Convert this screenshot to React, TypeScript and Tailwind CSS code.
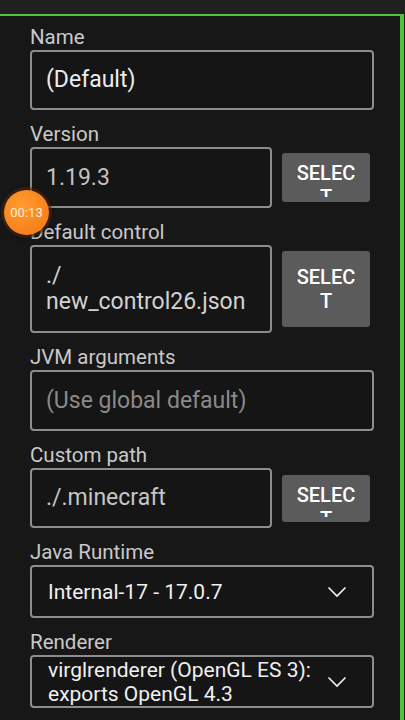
import React from 'react';

const font = { fontFamily: 'Roboto, "Noto Sans", sans-serif' };

const Label = ({ children }: { children: React.ReactNode }) => (
  <div className="h-[25px] text-[20.5px] leading-6 text-[#c9c9c9]">{children}</div>
);

const Box = ({ h, children, className = '' }: { h: string; children: React.ReactNode; className?: string }) => (
  <div className={`${h} flex items-center rounded-[4px] border-2 border-[#8d8d8d] bg-[#151515] pl-[14px] ${className}`}>
    {children}
  </div>
);

const Chevron = () => (
  <svg width="20" height="12" viewBox="0 0 20 12" className="shrink-0">
    <polyline points="1.5,1.5 10,10 18.5,1.5" fill="none" stroke="#f2f2f2" strokeWidth="1.6" />
  </svg>
);

// button text wraps to "SELEC / T"; short buttons clip the second line
const SelectButton = ({ tall }: { tall?: boolean }) =>
  tall ? (
    <div className="flex h-full w-[88px] items-center justify-center rounded-[3px] bg-[#5b5b5b] text-center text-[20px] font-medium leading-6 text-white">
      SELEC
      <br />T
    </div>
  ) : (
    <div className="h-full w-[88px] rounded-[3px] bg-[#5b5b5b] pb-[5px] pt-[8px] text-center text-[20px] font-medium leading-6 text-white">
      <div className="h-full overflow-hidden">
        SELEC
        <br />T
      </div>
    </div>
  );

export default function App() {
  return (
    <div className="relative flex h-[720px] w-[405px] flex-col overflow-hidden bg-[#202020]" style={font}>
      <div className="h-[14px] shrink-0" />
      <div className="mr-[1px] flex-1 border-r-4 border-t-2 border-[#4fc23a] bg-[#171717] pl-[30px] pr-[26px] pt-[9px]">
        {/* Name */}
        <Label>Name</Label>
        <Box h="h-[60px]">
          <span className="text-[23px] leading-[26px] text-[#ececec]">(Default)</span>
        </Box>

        {/* Version */}
        <div className="mt-3">
          <Label>Version</Label>
          <div className="flex h-[61px] gap-[10px]">
            <Box h="h-full" className="w-[242px]">
              <span className="text-[23px] leading-[26px] text-[#c2c2c2]">1.19.3</span>
            </Box>
            <div className="py-[6px]">
              <SelectButton />
            </div>
          </div>
        </div>

        {/* Default control */}
        <div className="mt-3">
          <Label>Default control</Label>
          <div className="flex h-[88px] gap-[10px]">
            <Box h="h-full" className="w-[242px]">
              <div className="text-[23px] leading-[26px] text-[#d2d2d2]">
                <div>./</div>
                <div>new_control26.json</div>
              </div>
            </Box>
            <div className="py-[6px]">
              <SelectButton tall />
            </div>
          </div>
        </div>

        {/* JVM arguments */}
        <div className="mt-3">
          <Label>JVM arguments</Label>
          <Box h="h-[61px]">
            <span className="text-[23px] leading-[26px] text-[#8a8a8a]">(Use global default)</span>
          </Box>
        </div>

        {/* Custom path */}
        <div className="mt-3">
          <Label>Custom path</Label>
          <div className="flex h-[60px] gap-[10px]">
            <Box h="h-full" className="w-[242px]">
              <span className="text-[23px] leading-[26px] text-[#c6c6c6]">./.minecraft</span>
            </Box>
            <div className="pb-[6px] pt-[7px]">
              <SelectButton />
            </div>
          </div>
        </div>

        {/* Java Runtime */}
        <div className="mt-3">
          <Label>Java Runtime</Label>
          <Box h="h-[53px]" className="justify-between pl-[16px] pr-[25px]">
            <span className="text-[21px] leading-6 text-[#f0f0f0]">Internal-17 - 17.0.7</span>
            <Chevron />
          </Box>
        </div>

        {/* Renderer */}
        <div className="mt-3">
          <Label>Renderer</Label>
          <Box h="h-[53px]" className="justify-between pl-[16px] pr-[25px]">
            <div className="text-[21px] leading-6 text-[#f0f0f0]">
              <div>virglrenderer (OpenGL ES 3):</div>
              <div>exports OpenGL 4.3</div>
            </div>
            <Chevron />
          </Box>
        </div>
      </div>

      {/* recording timer bubble */}
      <div className="absolute left-[4px] top-[190px] flex h-[45px] w-[45px] items-center justify-center rounded-full bg-[radial-gradient(circle_at_40%_35%,#ff9b30,#f27610)] shadow-[0_0_0_3px_rgba(80,36,12,0.55),0_2px_6px_rgba(0,0,0,0.5)]">
        <span className="text-[13px] leading-none text-[#ffeede]">00:13</span>
      </div>
    </div>
  );
}
